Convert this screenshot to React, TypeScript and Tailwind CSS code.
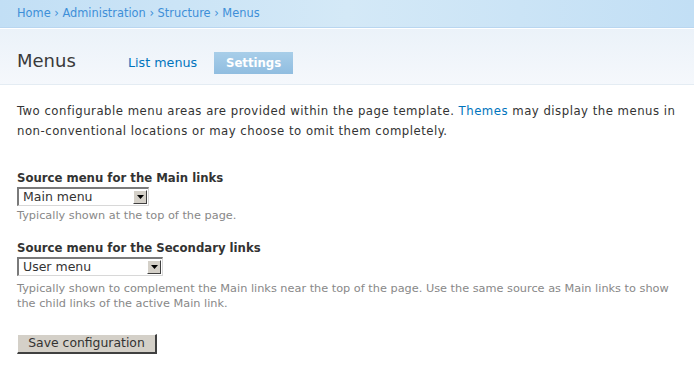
import React from "react";

function FakeSelect({ value, width }: { value: string; width: string }) {
  return (
    <div className={`flex h-[19px] ${width} border-t-2 border-l-2 border-t-[#7a7a7a] border-l-[#7a7a7a] border-b border-r border-b-[#d8d8d8] border-r-[#d8d8d8] bg-white`}>
      <div className="flex-1 pl-[4px] text-[12.5px] leading-[16px] text-[#333]">{value}</div>
      <div className="my-[1px] mr-[1px] flex w-[14px] items-center justify-center border-t border-l border-t-white border-l-white border-b border-r border-b-[#404040] border-r-[#404040] bg-[#d4d0c8]">
        <svg width="7" height="4" viewBox="0 0 7 4"><polygon points="0,0 7,0 3.5,4" fill="#000" /></svg>
      </div>
    </div>
  );
}

export default function App() {
  return (
    <div className="w-[694px] h-[372px] bg-white overflow-hidden" style={{ fontFamily: '"DejaVu Sans", Verdana, sans-serif' }}>
      <div className="h-[28px] bg-gradient-to-r from-[#c2dff5] via-[#d4e9f7] to-[#c2dff5] border-b border-b-[#b9d6f0] flex items-center px-[17px]">
        <div className="text-[11.4px] text-[#3e8fd8] leading-none">
          Home › Administration › Structure › Menus
        </div>
      </div>
      <div className="h-[1px] bg-white" />
      <div className="h-[56px] bg-gradient-to-b from-[#ebf2f9] to-[#f5f8fc] border-b border-b-[#e4ecf3] flex items-end px-[17px] pb-[10px]">
        <h1 className="text-[18px] leading-[22px] text-[#3a3a3a] font-normal w-[111px] mb-[2px]">Menus</h1>
        <div className="flex items-center gap-[17px]">
          <span className="text-[12.7px] text-[#0074bd] leading-[22px]">List menus</span>
          <span className="h-[22px] w-[79px] flex items-center justify-center bg-gradient-to-b from-[#a8cee9] to-[#90bde0] text-white font-bold text-[13px]" style={{ fontFamily: '"DejaVu Sans Condensed", "DejaVu Sans", sans-serif' }}>Settings</span>
        </div>
      </div>
      <div className="px-[17px] pt-[16px]">
        <p className="text-[13px] leading-[20px] text-[#333] tracking-[0.5px]" style={{ fontFamily: '"DejaVu Sans Condensed", "DejaVu Sans", sans-serif' }}>
          Two configurable menu areas are provided within the page template. <span className="text-[#0074bd]">Themes</span> may display the menus in non-conventional locations or may choose to omit them completely.
        </p>
        <div className="mt-[27px]">
          <div className="text-[13px] font-bold text-[#333] leading-[19px]" style={{ fontFamily: '"DejaVu Sans Condensed", "DejaVu Sans", sans-serif' }}>Source menu for the Main links</div>
          <FakeSelect value="Main menu" width="w-[132px]" />
          <div className="text-[11.3px] text-[#888] leading-[15px] mt-[2px]">Typically shown at the top of the page.</div>
        </div>
        <div className="mt-[15px]">
          <div className="text-[13px] font-bold text-[#333] leading-[19px]" style={{ fontFamily: '"DejaVu Sans Condensed", "DejaVu Sans", sans-serif' }}>Source menu for the Secondary links</div>
          <FakeSelect value="User menu" width="w-[146px]" />
          <div className="text-[11.3px] text-[#888] leading-[15px] mt-[5px]">Typically shown to complement the Main links near the top of the page. Use the same source as Main links to show the child links of the active Main link.</div>
        </div>
        <button className="mt-[23px] h-[20px] w-[140px] bg-[#d4d0c8] border-t border-l border-t-[#ffffff] border-l-[#ffffff] border-b-2 border-r-2 border-b-[#404040] border-r-[#404040] text-[12.4px] text-[#333] leading-none">Save configuration</button>
      </div>
    </div>
  );
}
